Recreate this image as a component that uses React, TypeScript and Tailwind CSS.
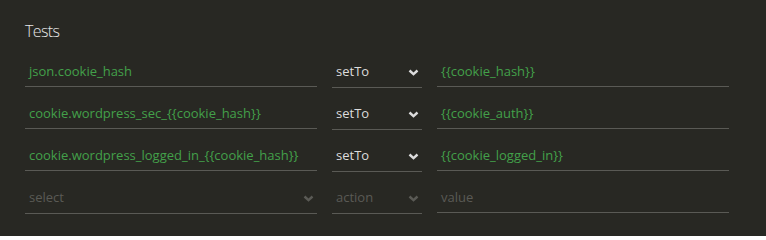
const ROWS = [
  { path: 'json.cookie_hash', action: 'setTo', value: '{{cookie_hash}}' },
  { path: 'cookie.wordpress_sec_{{cookie_hash}}', action: 'setTo', value: '{{cookie_auth}}' },
  { path: 'cookie.wordpress_logged_in_{{cookie_hash}}', action: 'setTo', value: '{{cookie_logged_in}}' },
]

function Chevron({ dim }: { dim?: boolean }) {
  return (
    <svg width="11" height="7" viewBox="0 0 11 7" className={dim ? 'text-[#5a5a55]' : 'text-[#dcdcdc]'}>
      <path d="M1.5 1.5 L5.5 5.2 L9.5 1.5" fill="none" stroke="currentColor" strokeWidth="2.4" />
    </svg>
  )
}

export default function App() {
  return (
    <div
      className="min-h-[236px] w-[766px] bg-[#282823] pl-[25px] pt-[20px] text-[13px]"
      style={{ fontFamily: '"Open Sans", "Noto Sans", sans-serif' }}
    >
      <h2 className="h-[22px] text-[16px] font-light leading-[22px] tracking-[-0.6px] text-[#e6e6e6]">Tests</h2>
      <div className="mt-[13px] flex w-[704px] flex-col gap-[10px]">
        {ROWS.map((r) => (
          <div key={r.path} className="flex h-[32px] items-start gap-[15px]">
            <div className="flex h-[32px] w-[292px] shrink-0 items-center border-b border-[#5a5a55] px-[4px] pt-[2px] text-[#43a04a]">
              {r.path}
            </div>
            <div className="flex h-[33px] w-[90px] shrink-0 items-center justify-between border-b border-[#5a5a55] pl-[4px] pr-[3px] pt-[2px] text-[#dcdcdc]">
              <span>{r.action}</span>
              <Chevron />
            </div>
            <div className="flex h-[32px] w-[292px] shrink-0 items-center border-b border-[#5a5a55] px-[4px] pt-[2px] text-[#43a04a]">
              {r.value}
            </div>
          </div>
        ))}
        <div className="flex h-[32px] items-start gap-[15px]">
          <div className="flex h-[33px] w-[292px] shrink-0 items-center justify-between border-b border-[#5a5a55] pl-[4px] pr-[3px] pt-[2px] text-[#5a5a55]">
            <span>select</span>
            <Chevron dim />
          </div>
          <div className="flex h-[33px] w-[90px] shrink-0 items-center justify-between border-b border-[#5a5a55] pl-[4px] pr-[3px] pt-[2px] text-[#5a5a55]">
            <span>action</span>
            <Chevron dim />
          </div>
          <div className="flex h-[32px] w-[292px] shrink-0 items-center border-b border-[#5a5a55] px-[4px] pt-[2px] text-[#5a5a55]">
            value
          </div>
        </div>
      </div>
    </div>
  )
}
